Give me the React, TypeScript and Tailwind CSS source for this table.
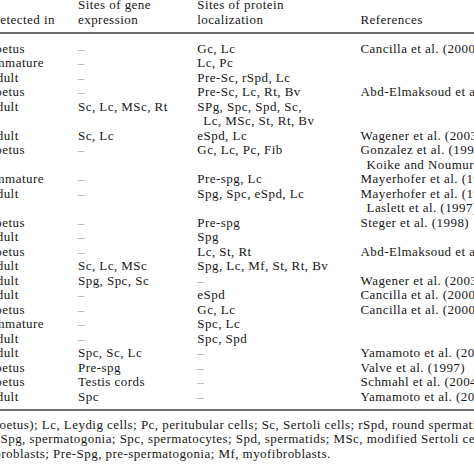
import React from "react";

type Row = [string[], string[], string[], string[]];

const rows: Row[] = [
  [["foetus"], ["–"], ["Gc, Lc"], ["Cancilla et al. (2000)"]],
  [["immature"], ["–"], ["Lc, Pc"], []],
  [["adult"], ["–"], ["Pre-Sc, rSpd, Lc"], []],
  [["foetus"], ["–"], ["Pre-Sc, Lc, Rt, Bv"], ["Abd-Elmaksoud et al. (2005)"]],
  [["adult"], ["Sc, Lc, MSc, Rt"], ["SPg, Spc, Spd, Sc,", "Lc, MSc, St, Rt, Bv"], []],
  [["adult"], ["Sc, Lc"], ["eSpd, Lc"], ["Wagener et al. (2003)"]],
  [["foetus"], ["–"], ["Gc, Lc, Pc, Fib"], ["Gonzalez et al. (1996);", "Koike and Noumura (1994)"]],
  [["immature"], ["–"], ["Pre-spg, Lc"], ["Mayerhofer et al. (1999)"]],
  [["adult"], ["–"], ["Spg, Spc, eSpd, Lc"], ["Mayerhofer et al. (1999);", "Laslett et al. (1997)"]],
  [["foetus"], ["–"], ["Pre-spg"], ["Steger et al. (1998)"]],
  [["adult"], ["–"], ["Spg"], []],
  [["foetus"], ["–"], ["Lc, St, Rt"], ["Abd-Elmaksoud et al. (2005)"]],
  [["adult"], ["Sc, Lc, MSc"], ["Spg, Lc, Mf, St, Rt, Bv"], []],
  [["adult"], ["Spg, Spc, Sc"], ["–"], ["Wagener et al. (2003)"]],
  [["adult"], ["–"], ["eSpd"], ["Cancilla et al. (2000)"]],
  [["foetus"], ["–"], ["Gc, Lc"], ["Cancilla et al. (2000)"]],
  [["immature"], ["–"], ["Spc, Lc"], []],
  [["adult"], ["–"], ["Spc, Spd"], []],
  [["adult"], ["Spc, Sc, Lc"], ["–"], ["Yamamoto et al. (2000)"]],
  [["foetus"], ["Pre-spg"], ["–"], ["Valve et al. (1997)"]],
  [["foetus"], ["Testis cords"], ["–"], ["Schmahl et al. (2004)"]],
  [["adult"], ["Spc"], ["–"], ["Yamamoto et al. (2000)"]],
];

function Cell({ lines }: { lines: string[] }) {
  return (
    <div className="flex flex-col">
      {lines.map((l, i) =>
        l === "–" ? (
          <div key={i} className="text-[#9a9a9a]">–</div>
        ) : (
          <div key={i} className={i > 0 ? "pl-[6px]" : ""}>
            {l}
          </div>
        )
      )}
    </div>
  );
}

export default function App() {
  return (
    <div
      className="w-[474px] h-[474px] overflow-hidden bg-white text-[#161616] text-[13px] leading-[14.5px] tracking-[0.45px] whitespace-nowrap"
      style={{ fontFamily: '"Liberation Serif", "Times New Roman", serif' }}
    >
      <div className="-ml-[9.5px] -mt-[1.75px] w-[760px]">
        <div className="grid grid-cols-[87.5px_119.3px_163.2px_300px] pb-[4.75px]">
          <div className="flex flex-col">
            <div>&nbsp;</div>
            <div>Detected in</div>
          </div>
          <div className="flex flex-col">
            <div>Sites of gene</div>
            <div>expression</div>
          </div>
          <div className="flex flex-col">
            <div>Sites of protein</div>
            <div>localization</div>
          </div>
          <div className="flex flex-col">
            <div>&nbsp;</div>
            <div>References</div>
          </div>
        </div>
        <div className="h-[2px] bg-[#6e6e6e]" />
        <div className="flex flex-col pt-[7.75px] pb-[5px]">
          {rows.map((r, i) => (
            <div key={i} className="grid grid-cols-[87.5px_119.3px_163.2px_300px]">
              <Cell lines={r[0]} />
              <Cell lines={r[1]} />
              <Cell lines={r[2]} />
              <Cell lines={r[3]} />
            </div>
          ))}
        </div>
        <div className="h-[2px] bg-[#6e6e6e]" />
        <div className="flex flex-col pt-[6.5px]">
          <div className="pl-[4.3px]">
            foetus); Lc, Leydig cells; Pc, peritubular cells; Sc, Sertoli cells; rSpd, round spermatids; eSpd, elongated
          </div>
          <div className="pl-[10px]">
            Spg, spermatogonia; Spc, spermatocytes; Spd, spermatids; MSc, modified Sertoli cells; St, stromal cells;
          </div>
          <div className="-ml-[5px]">
            fibroblasts; Pre-Spg, pre-spermatogonia; Mf, myofibroblasts.
          </div>
        </div>
      </div>
    </div>
  );
}
